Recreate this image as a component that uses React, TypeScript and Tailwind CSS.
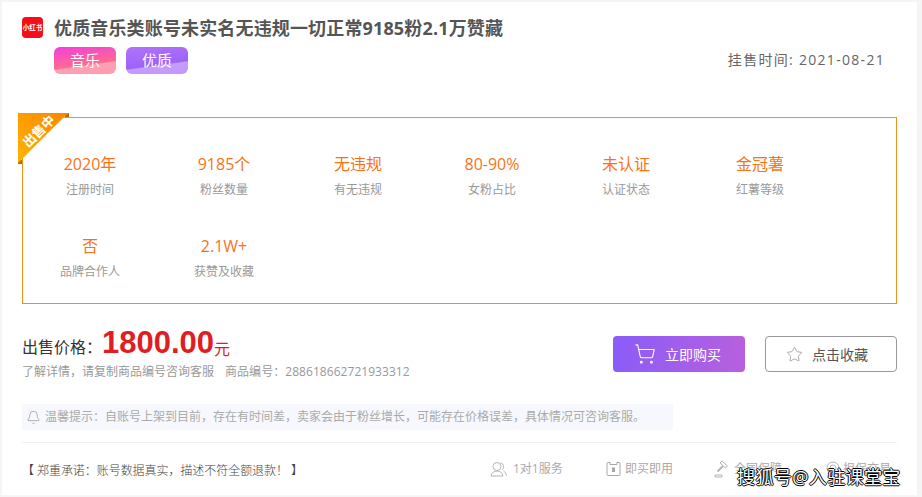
import { ShoppingCart, Star, Bell } from "lucide-react";

const stats = [
  { value: "2020年", label: "注册时间" },
  { value: "9185个", label: "粉丝数量" },
  { value: "无违规", label: "有无违规" },
  { value: "80-90%", label: "女粉占比" },
  { value: "未认证", label: "认证状态" },
  { value: "金冠薯", label: "红薯等级" },
  { value: "否", label: "品牌合作人" },
  { value: "2.1W+", label: "获赞及收藏" },
];

const UserIcon = () => (
  <svg width="17" height="16" viewBox="0 0 17 16" fill="none" stroke="#b5b5b5" strokeWidth="1">
    <circle cx="7" cy="5.5" r="4" />
    <path d="M1 15c.5-3 2.5-5 6-5s5.500 2 6 5z" />
    <path d="M10.500 1.800a4 4 0 0 1 2 6.700M13.500 10c1.500.8 2.500 2.300 3 4.500" />
  </svg>
);

const PhoneIcon = () => (
  <svg width="15" height="16" viewBox="0 0 15 16" fill="none" stroke="#a8a8a8" strokeWidth="1">
    <path d="M4 1.500H2a1 1 0 0 0-1 1v11a1 1 0 0 0 1 1h11a1 1 0 0 0 1-1v-11a1 1 0 0 0-1-1h-2" />
    <path d="M4 1v2.500h7V1" />
    <rect x="6" y="6.500" width="3" height="4.500" fill="#a8a8a8" stroke="none" />
  </svg>
);

const GavelIcon = () => (
  <svg width="17" height="18" viewBox="0 0 17 18" fill="none" stroke="#b5b5b5" strokeWidth="1">
    <path d="M8 1l5.500 5-2 2L6 3z" />
    <path d="M9 6L3.500 11.500" strokeWidth="2" />
    <path d="M1 15h7v2H1z" />
  </svg>
);

const GuardIcon = () => (
  <svg width="16" height="17" viewBox="0 0 16 17" fill="none" stroke="#b5b5b5" strokeWidth="1">
    <circle cx="8" cy="7" r="6" />
    <circle cx="8" cy="7" r="3" />
    <path d="M4 12l-1 4M12 12l1 4" />
  </svg>
);

const perks = [
  { icon: UserIcon, text: "1对1服务", w: "w-[116px]", gap: "gap-[6px]" },
  { icon: PhoneIcon, text: "即买即用", w: "w-[108px]", gap: "gap-[4px]" },
  { icon: GavelIcon, text: "全国保障", w: "w-[111px]", gap: "gap-[3px]" },
  { icon: GuardIcon, text: "担保交易", w: "w-[66px]", gap: "gap-[2px]" },
];

export default function App() {
  return (
    <div className="relative h-[497px] w-[922px] overflow-hidden bg-[#f5f5f5] pl-[2px] pt-[2px] font-['Open_Sans','Noto_Sans_CJK_SC',sans-serif]">
      <div className="h-[493px] w-[915px] bg-white">
        {/* Title */}
        <div className="flex h-[45px] items-start pl-5 pt-[14px]">
          <div className="mt-[1px] flex h-[21px] w-[21px] items-center justify-center rounded-[4px] bg-[#f60d17] text-[6.500px] font-bold whitespace-nowrap text-white">
            小红书
          </div>
          <h1 className="ml-[11px] text-[18px] leading-[24px] font-bold tracking-[0.15px] text-[#555]">
            优质音乐类账号未实名无违规一切正常9185粉2.1万赞藏
          </h1>
        </div>

        {/* Tags */}
        <div className="flex h-[70px] justify-between pl-[52px] pr-[32px]">
          <div className="flex gap-[10px]">
            <span className="flex h-[27px] w-[62px] items-center justify-center rounded-[6px] bg-[linear-gradient(172deg,#f13fdc_0%,#ff6a90_62%,#ffa0b4_66%,#ff9bb0_100%)] text-[15px] text-white">
              音乐
            </span>
            <span className="flex h-[27px] w-[62px] items-center justify-center rounded-[6px] bg-[linear-gradient(172deg,#b473f8_0%,#9c63f8_62%,#c79bfa_66%,#c498fa_100%)] text-[15px] text-white">
              优质
            </span>
          </div>
          <span className="pt-[3px] text-[14px] leading-[20px] tracking-[1.3px] text-[#666]">挂售时间: 2021-08-21</span>
        </div>

        {/* Stats */}
        <div className="relative ml-5 h-[187px] w-[875px] border border-[#f39019]">
          <div className="grid grid-cols-[134px_134px_134px_134px_134px_134px] pt-[34px]">
            {stats.map((s) => (
              <div key={s.label} className="flex h-[82px] flex-col items-center">
                <span className="text-[16px] leading-[24px] text-[#f97316]">{s.value}</span>
                <span className="mt-[5px] text-[12px] leading-[18px] text-[#999]">{s.label}</span>
              </div>
            ))}
          </div>
          {/* Ribbon */}
          <svg className="absolute left-[-5px] top-[-5px]" width="52" height="52" viewBox="0 0 52 52">
            <defs>
              <linearGradient id="rb" x1="0" y1="1" x2="1" y2="0">
                <stop offset="0" stopColor="#ffb400" />
                <stop offset="1" stopColor="#fb8500" />
              </linearGradient>
            </defs>
            <path d="M46 0h5v4h-4z" fill="#b86f00" />
            <path d="M0 46v5h4v-4z" fill="#b86f00" />
            <path d="M0 0h51L46 4 4 46 0 50z" fill="url(#rb)" />
          </svg>
          <span className="absolute left-[-4px] top-[4px] -rotate-45 text-[13px] leading-[18px] font-bold whitespace-nowrap text-white">
            出售中
          </span>
        </div>

        {/* Price */}
        <div className="flex justify-between pl-5 pr-[20px] pt-[19px]">
          <div>
            <div className="flex h-[38px] items-end">
              <span className="pb-[2px] text-[16px] leading-[24px] text-[#333]">出售价格：</span>
              <span className="mb-[-1px] font-['Liberation_Sans','Noto_Sans_CJK_SC',sans-serif] text-[31px] leading-[38px] font-bold text-[#e11d24]">
                1800.00
              </span>
              <span className="pb-[1px] text-[16px] leading-[22px] text-[#e11d24]">元</span>
            </div>
            <p className="mt-[2px] text-[12px] leading-[18px] text-[#999]">
              了解详情，请复制商品编号咨询客服
              <span className="ml-[11px] tracking-[0.05px]">商品编号：288618662721933312</span>
            </p>
          </div>
          <div className="flex gap-5 pt-[13px]">
            <button className="flex h-9 w-[132px] items-center gap-[9px] rounded-[4px] bg-[linear-gradient(100deg,#8a5cf9,#b860dd)] pl-[21px] text-[14px] text-white">
              <ShoppingCart size={22} strokeWidth={1.2} />
              立即购买
            </button>
            <button className="flex h-9 w-[132px] items-center gap-[9px] rounded-[4px] border border-[#999] pl-[20px] text-[14px] text-[#555]">
              <Star size={17} strokeWidth={1} className="text-[#888]" />
              点击收藏
            </button>
          </div>
        </div>

        {/* Notice */}
        <div className="ml-5 mt-[23px] flex h-[26px] w-[651px] items-center gap-1 bg-[#f7f8fd] pl-1 text-[12px] text-[#aaa]">
          <Bell size={15} strokeWidth={1.2} className="text-[#999]" />
          温馨提示：自账号上架到目前，存在有时间差，卖家会由于粉丝增长，可能存在价格误差，具体情况可咨询客服。
        </div>
        <div className="ml-5 mt-[12px] h-px w-[875px] bg-[#f0f0f0]" />

        {/* Footer */}
        <div className="flex items-start justify-between pl-5 pr-[26px] pt-[17px]">
          <span className="mt-[2px] text-[12px] leading-[18px] font-light tracking-[-0.05px] text-[#444]">【 郑重承诺：账号数据真实，描述不符全额退款！ 】</span>
          <div className="flex">
            {perks.map((p) => (
              <div key={p.text} className={`flex items-center text-[12px] leading-[18px] text-[#aaa] ${p.w} ${p.gap}`}>
                <p.icon />
                <span className="whitespace-nowrap">{p.text}</span>
              </div>
            ))}
          </div>
        </div>
      </div>

      {/* Watermark */}
      <span className="absolute left-[737px] top-[464px] text-[18px] leading-[26px] tracking-[0.4px] text-white [text-shadow:-1px_0_#000,1px_0_#000,0_-1px_#000,0_1px_#000]">
        搜狐号@入驻课堂宝
      </span>
    </div>
  );
}
